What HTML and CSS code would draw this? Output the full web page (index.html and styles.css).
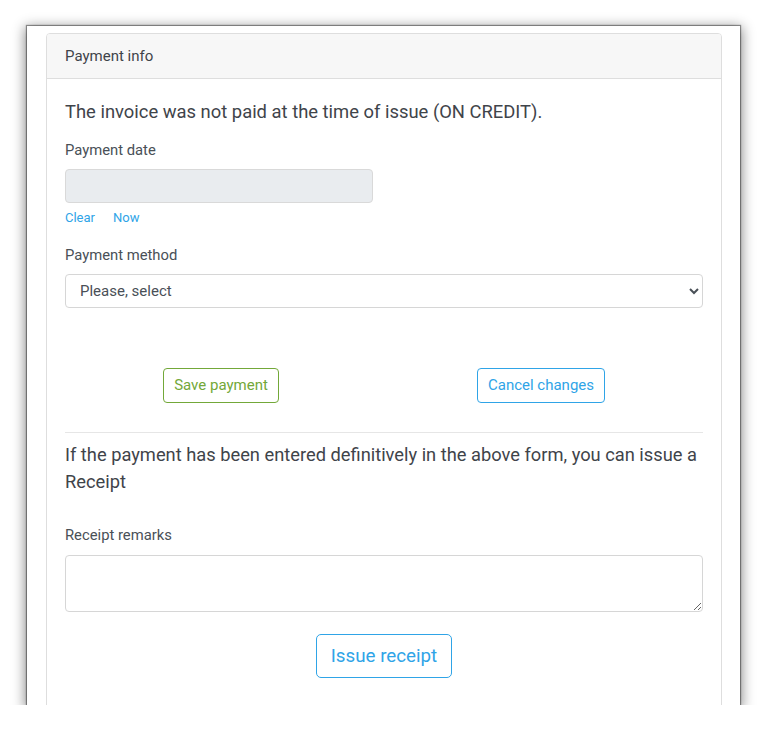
FILE: index.html
```html
<!DOCTYPE html>
<html lang="en">
<head>
<meta charset="utf-8">
<title>Payment info</title>
<link rel="stylesheet" href="styles.css">
</head>
<body>
<div class="window">
  <div class="card">
    <div class="card-header">Payment info</div>
    <div class="card-body">
      <h5 class="lead-title">The invoice was not paid at the time of issue (ON CREDIT).</h5>
      <label class="form-label" for="pdate">Payment date</label>
      <input class="form-control date-input" id="pdate" type="text" disabled>
      <div class="date-links">
        <a href="#" class="link">Clear</a>
        <a href="#" class="link">Now</a>
      </div>
      <label class="form-label label-gap" for="pmethod">Payment method</label>
      <select class="form-select" id="pmethod">
        <option>Please, select</option>
      </select>
      <div class="btn-row">
        <div class="btn-col"><button class="btn btn-success">Save payment</button></div>
        <div class="btn-col"><button class="btn btn-primary">Cancel changes</button></div>
      </div>
      <hr class="divider">
      <p class="receipt-text">If the payment has been entered definitively in the above form, you can issue a Receipt</p>
      <label class="form-label remarks-label" for="remarks">Receipt remarks</label>
      <textarea class="form-control remarks" id="remarks"></textarea>
      <div class="issue-row">
        <button class="btn btn-primary btn-lg">Issue receipt</button>
      </div>
    </div>
  </div>
</div>
</body>
</html>
```
FILE: styles.css
```css
* { box-sizing: border-box; }
html, body {
  margin: 0;
  padding: 0;
  background: #ffffff;
}
body {
  font-family: Roboto, "Liberation Sans", Arial, sans-serif;
  color: #495057;
  font-size: 15px;
  overflow: hidden;
}
.window {
  margin: 26px 0 0 27px;
  width: 713px;
  height: 679px;
  background: #fff;
  overflow: hidden;
  box-shadow: 0 0 1px 1px rgba(0,0,0,0.4), 0 3px 12px 2px rgba(0,0,0,0.45);
  padding: 7px 18px 0 19px;
}
.card {
  border: 1px solid #dedede;
  border-radius: 4px;
  background: #fff;
  height: 720px;
}
.card-header {
  background: #f7f7f7;
  border-bottom: 1px solid #dedede;
  border-radius: 3px 3px 0 0;
  height: 45px;
  padding: 0 18px;
  line-height: 44px;
  font-size: 15px;
  color: #3f444a;
}
.card-body {
  padding: 21px 18px 0 18px;
}
.lead-title {
  margin: 0 0 16px 0;
  font-size: 18.4px;
  line-height: 23px;
  font-weight: 400;
  color: #3f444a;
}
.form-label {
  display: block;
  font-size: 14.8px;
  line-height: 22px;
  margin-bottom: 8px;
  color: #495057;
}
.form-control, .form-select {
  display: block;
  width: 100%;
  font-family: inherit;
  font-size: 15px;
  color: #495057;
  border: 1px solid #d6d6d6;
  border-radius: 4px;
  background: #fff;
}
.date-input {
  width: 308px;
  height: 34px;
  background: #e9ecef;
  border-color: #d9d9d9;
}
.date-links {
  margin-top: 6px;
  font-size: 13px;
  line-height: 18px;
  display: flex;
  gap: 18px;
}
.link {
  color: #2fa4e7;
  text-decoration: none;
}
.label-gap {
  margin-top: 17px;
}
.form-select {
  height: 34px;
  padding: 0 8px 0 10px;
}
.btn-row {
  margin: 60px 2px 0 -4px;
  display: grid;
  grid-template-columns: 1fr 1fr;
}
.btn-col {
  display: flex;
  justify-content: center;
}
.btn {
  font-family: inherit;
  font-size: 15px;
  line-height: 21px;
  padding: 6px 10px;
  background: #fff;
  border: 1px solid;
  border-radius: 4px;
  cursor: pointer;
}
.btn-success {
  color: #73a839;
  border-color: #73a839;
}
.btn-primary {
  color: #2fa4e7;
  border-color: #2fa4e7;
}
.divider {
  margin: 29px 0 0 0;
  border: 0;
  border-top: 1px solid #e6e6e6;
  height: 0;
}
.receipt-text {
  margin: 8px 0 0 0;
  font-size: 18.3px;
  line-height: 27px;
  color: #3f444a;
}
.remarks-label {
  margin-top: 29px;
  margin-bottom: 9px;
}
.remarks {
  height: 57px;
  resize: vertical;
}
.issue-row {
  margin-top: 22px;
  display: flex;
  justify-content: center;
}
.btn-lg {
  font-size: 18.75px;
  line-height: 28px;
  padding: 7px 14px;
  border-radius: 5px;
}
```
